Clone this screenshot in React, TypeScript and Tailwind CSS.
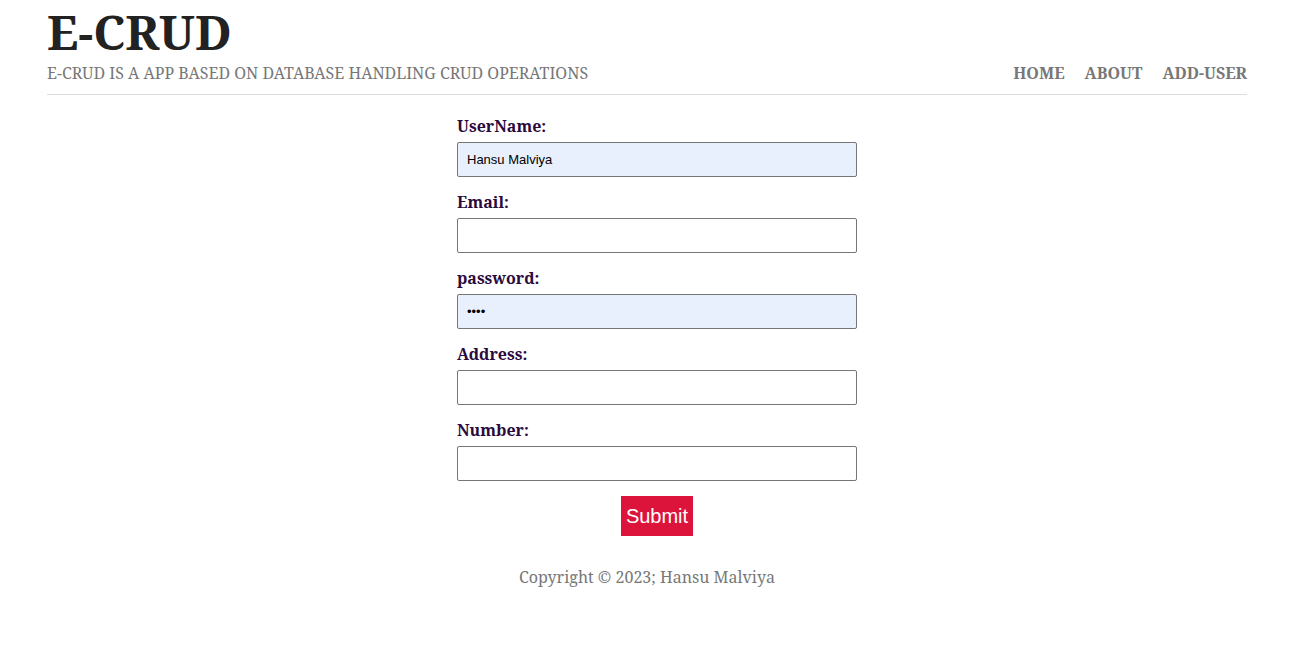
import { useState } from 'react';

const serif = 'font-["Noto_Serif","DejaVu_Serif",serif]';

const fields = [
  { name: 'username', label: 'UserName:', type: 'text', value: 'Hansu Malviya', filled: true },
  { name: 'email', label: 'Email:', type: 'email', value: '', filled: false },
  { name: 'password', label: 'password:', type: 'password', value: 'abcd', filled: true },
  { name: 'address', label: 'Address:', type: 'text', value: '', filled: false },
  { name: 'number', label: 'Number:', type: 'text', value: '', filled: false },
];

export default function App() {
  const [values, setValues] = useState<Record<string, string>>(
    Object.fromEntries(fields.map(f => [f.name, f.value]))
  );

  return (
    <div className={`min-h-screen bg-white ${serif}`}>
      <div className="w-[1200px] ml-[47px]">
        {/* Header */}
        <header className="flex items-end justify-between border-b border-[#dddddd] pb-[12px]">
          <div>
            <h1 className="text-[48px] leading-[64px] font-bold text-[#222222]">E-CRUD</h1>
            <p className="text-[16px] leading-[18px] text-[#777777] uppercase">
              E-CRUD is a app based on database handling crud operations
            </p>
          </div>
          <nav className="flex gap-[20px] text-[16px] leading-[18px] font-bold text-[#777777]">
            <a href="#">HOME</a>
            <a href="#">ABOUT</a>
            <a href="#">ADD-USER</a>
          </nav>
        </header>

        {/* Form */}
        <form className="w-[400px] ml-[410px] mt-[19px]" onSubmit={e => e.preventDefault()}>
          {fields.map(f => (
            <div key={f.name} className="mb-[13px]">
              <label className="block text-[16px] leading-[24px] font-bold text-[#2b0a3d] mb-[4px]">
                {f.label}
              </label>
              <input
                type={f.type}
                value={values[f.name]}
                onChange={e => setValues(v => ({ ...v, [f.name]: e.target.value }))}
                className={`block w-full h-[35px] px-[9px] border border-[#767676] rounded-[2px] font-["Liberation_Sans",Arial,sans-serif] text-[13px] text-black outline-none ${
                  f.filled ? 'bg-[#e8f0fe]' : 'bg-white'
                }`}
              />
            </div>
          ))}
          <div className="flex justify-center pt-[2px]">
            <button
              type="submit"
              className='h-[40px] px-[4.5px] bg-[#dc143c] text-white text-[20px] font-["Liberation_Sans",Arial,sans-serif]'
            >
              Submit
            </button>
          </div>
        </form>

        {/* Footer */}
        <footer className="text-center text-[16px] text-[#777777] mt-[29px]">
          Copyright © 2023; Hansu Malviya
        </footer>
      </div>
    </div>
  );
}
